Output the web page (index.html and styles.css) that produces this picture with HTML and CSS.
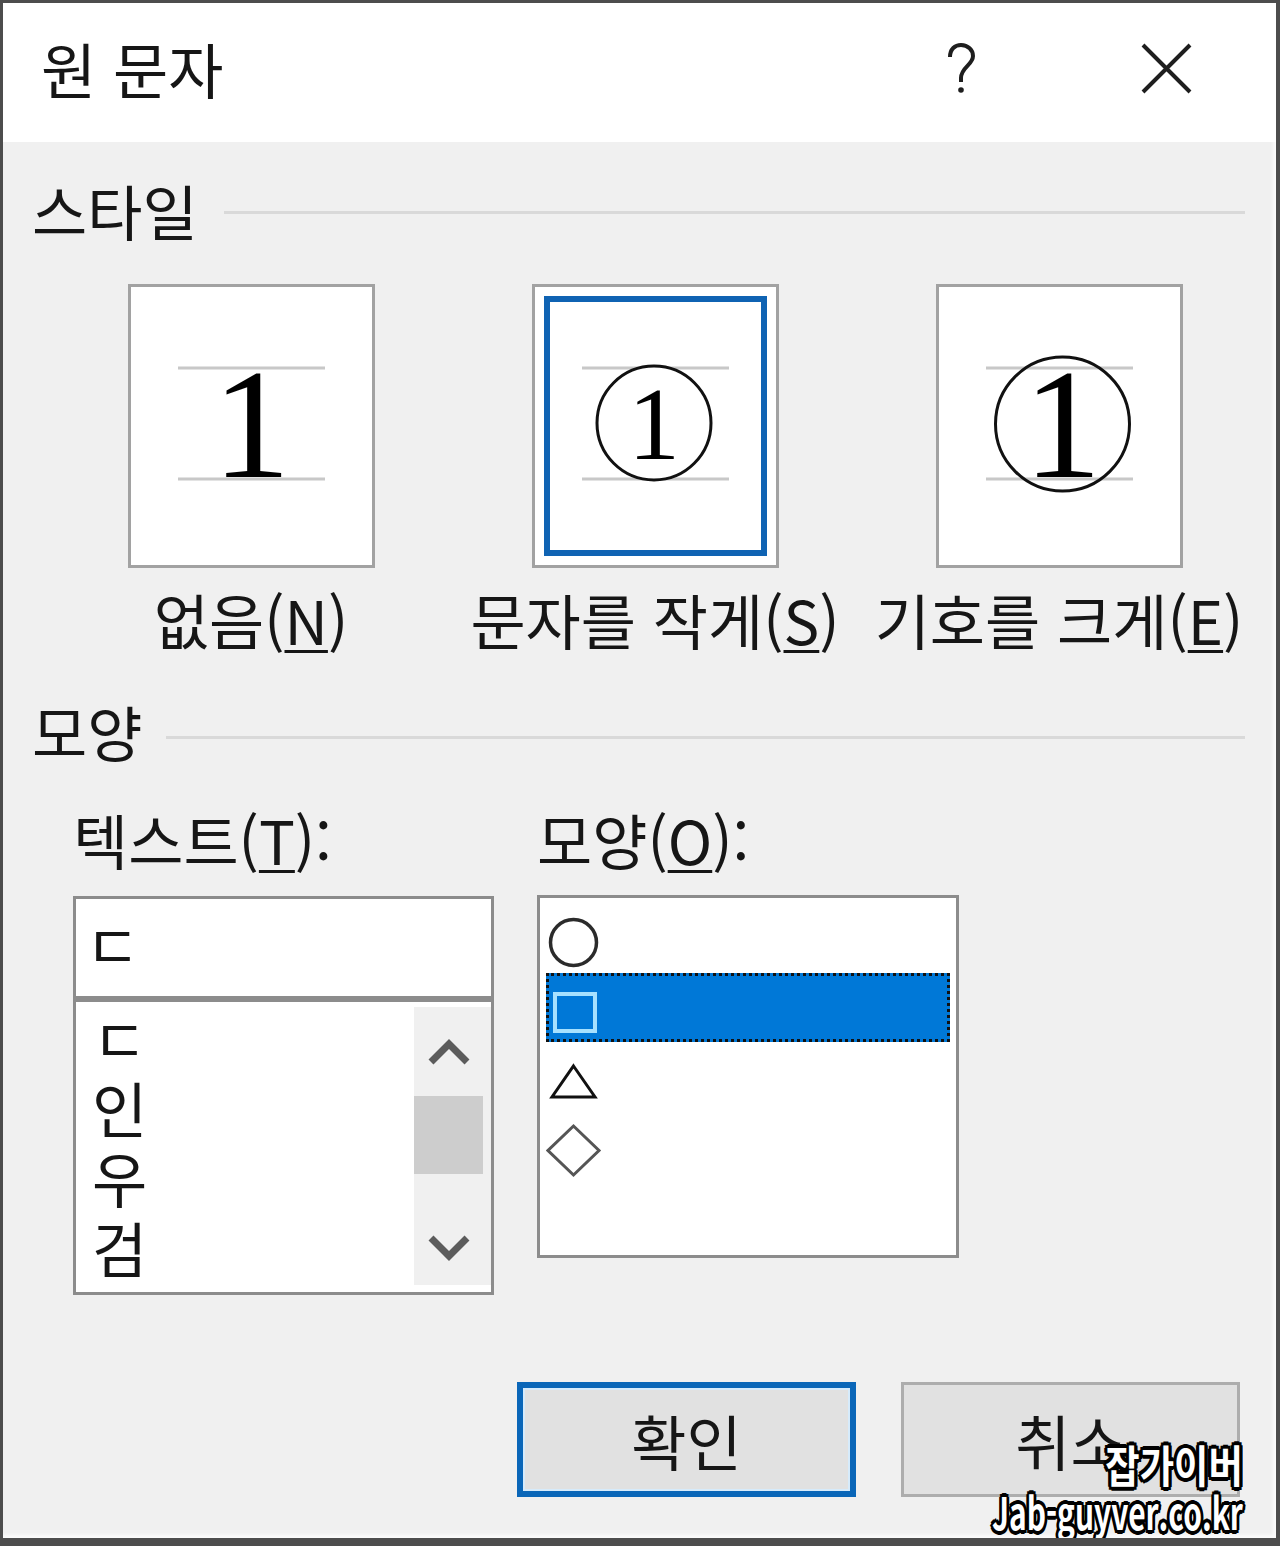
FILE: index.html
```html
<!DOCTYPE html>
<html lang="ko">
<head>
<meta charset="utf-8">
<title>원 문자</title>
<link rel="stylesheet" href="styles.css">
</head>
<body>
<div class="dialog">
  <div class="titlebar">
    <span class="title">원 문자</span>
    <svg class="help" width="32" height="52" viewBox="0 0 32 52"><path d="M5 14 C5 6 10 2 16 2 C23 2 28 7 28 13 C28 22 16 24 16 35 L16 39" fill="none" stroke="#1e1e1e" stroke-width="4"/><circle cx="16" cy="47" r="2.8" fill="#1e1e1e"/></svg>
    <svg class="close" width="51" height="51" viewBox="0 0 51 51"><path d="M2 2 L49 49 M49 2 L2 49" stroke="#1e1e1e" stroke-width="4"/></svg>
  </div>
  <div class="content">
    <div class="group-head style-head"><span>스타일</span><i class="rule"></i></div>
    <div class="styles">
      <div class="option">
        <div class="card">
          <svg width="241" height="278" viewBox="0 0 241 278">
            <line x1="47" y1="81" x2="194" y2="81" stroke="#c8c8c8" stroke-width="3"/>
            <line x1="47" y1="192" x2="194" y2="192" stroke="#c8c8c8" stroke-width="3"/>
            <text class="digit" x="120.5" y="190" font-size="156" text-anchor="middle">1</text>
          </svg>
        </div>
        <div class="opt-label">없음(<u>N</u>)</div>
      </div>
      <div class="option">
        <div class="card">
          <svg width="241" height="278" viewBox="0 0 241 278">
            <rect x="12" y="12" width="217" height="254" fill="none" stroke="#0f63b3" stroke-width="6"/>
            <line x1="47" y1="81" x2="194" y2="81" stroke="#c8c8c8" stroke-width="3"/>
            <line x1="47" y1="192" x2="194" y2="192" stroke="#c8c8c8" stroke-width="3"/>
            <circle cx="119" cy="136" r="57" fill="#fff" stroke="#111" stroke-width="3"/>
            <text class="digit" x="119" y="172" font-size="104" text-anchor="middle">1</text>
          </svg>
        </div>
        <div class="opt-label">문자를 작게(<u>S</u>)</div>
      </div>
      <div class="option">
        <div class="card">
          <svg width="241" height="278" viewBox="0 0 241 278">
            <line x1="47" y1="81" x2="194" y2="81" stroke="#c8c8c8" stroke-width="3"/>
            <line x1="47" y1="192" x2="194" y2="192" stroke="#c8c8c8" stroke-width="3"/>
            <text class="digit" x="123.5" y="190" font-size="156" text-anchor="middle">1</text>
            <circle cx="123.5" cy="137" r="67" fill="none" stroke="#111" stroke-width="3"/>
          </svg>
        </div>
        <div class="opt-label">기호를 크게(<u>E</u>)</div>
      </div>
    </div>

    <div class="group-head shape-head"><span>모양</span><i class="rule"></i></div>

    <div class="fields">
      <div class="field field-text">
        <div class="field-label">텍스트(<u>T</u>):</div>
        <div class="textbox">ㄷ</div>
        <div class="listbox">
          <ul class="items">
            <li>ㄷ</li>
            <li>인</li>
            <li>우</li>
            <li>검</li>
          </ul>
          <div class="scrollbar">
            <div class="sb-btn sb-up"><svg width="48" height="32" viewBox="0 0 48 32"><polyline points="6,26 24,8 42,26" fill="none" stroke="#5c5c5c" stroke-width="7"/></svg></div>
            <div class="sb-thumb"></div>
            <div class="sb-track"></div>
            <div class="sb-btn sb-down"><svg width="48" height="32" viewBox="0 0 48 32"><polyline points="6,6 24,24 42,6" fill="none" stroke="#5c5c5c" stroke-width="7"/></svg></div>
          </div>
        </div>
      </div>
      <div class="field field-shape">
        <div class="field-label">모양(<u>O</u>):</div>
        <div class="shapebox">
          <div class="shape-row"><svg width="56" height="69" viewBox="0 0 56 69"><circle cx="27.5" cy="38.5" r="23" fill="none" stroke="#2b2b2b" stroke-width="3.5"/></svg></div>
          <div class="shape-row selected"><svg width="56" height="69" viewBox="0 0 56 69"><rect x="9" y="21" width="40" height="37" fill="none" stroke="#a6e1ff" stroke-width="4"/></svg></div>
          <div class="shape-row"><svg width="56" height="69" viewBox="0 0 56 69"><polygon points="27.5,24 49,55 6,55" fill="none" stroke="#111" stroke-width="3"/></svg></div>
          <div class="shape-row"><svg width="56" height="69" viewBox="0 0 56 69"><polygon points="27.5,15 53,39.5 27.5,64 2,39.5" fill="none" stroke="#555" stroke-width="3"/></svg></div>
        </div>
      </div>
    </div>

    <div class="buttons">
      <button class="btn btn-default">확인</button>
      <button class="btn">취소</button>
    </div>
  </div>

  <div class="watermark">
    <span class="wm1">잡가이버</span>
    <span class="wm2">Jab-guyver.co.kr</span>
  </div>
</div>
</body>
</html>
```

FILE: styles.css
```css
* { box-sizing: border-box; }
html, body { margin: 0; padding: 0; }
body {
  width: 1280px;
  height: 1546px;
  font-family: "Noto Sans CJK KR", "Noto Sans", sans-serif;
  color: #161616;
  background: #f0f0f0;
}
.dialog {
  position: relative;
  width: 1280px;
  height: 1546px;
  border-style: solid;
  border-color: #4d4d4d;
  border-width: 3px 4px 8px 3px;
  background: #f0f0f0;
  overflow: hidden;
  box-shadow: inset -5px -5px 3px -2px #fbfbfb;
}
.titlebar {
  height: 139px;
  background: #fff;
  display: flex;
  align-items: flex-start;
  padding: 32px 84px 0 38px;
}
.title { flex: 1; font-size: 60px; line-height: 66px; }
.help { margin-top: 8px; display: block; }
.close { margin-left: 164px; margin-top: 8px; display: block; }

.content { padding: 0 31px 0 29px; }

.group-head {
  display: flex;
  align-items: center;
  font-size: 60px;
  line-height: 66px;
}
.group-head .rule {
  flex: 1;
  height: 3px;
  background: #d9d9d9;
  margin: 4px 0 0 26px;
}
.style-head { margin-top: 35px; }
.shape-head { margin-top: 46px; }
.shape-head .rule { margin-top: 12px; margin-left: 24px; }

.styles {
  display: grid;
  grid-template-columns: repeat(3, 380px);
  column-gap: 24px;
  width: 1188px;
  margin: 41px 0 0 29px;
}
.option { display: flex; flex-direction: column; align-items: center; }
.card {
  width: 247px;
  height: 284px;
  border: 3px solid #a2a2a2;
  background: #fff;
}
.card svg { display: block; }
.digit { font-family: "Liberation Serif", serif; fill: #000; }
.opt-label {
  margin-top: 18px;
  font-size: 60px;
  line-height: 66px;
  white-space: nowrap;
}
u { text-decoration-thickness: 3px; text-underline-offset: 5px; }

.fields {
  display: flex;
  gap: 43px;
  margin: 42px 0 0 41px;
}
.field { display: flex; flex-direction: column; }
.field-text { width: 421px; }
.field-shape { width: 422px; }
.field-label { font-size: 60px; line-height: 66px; white-space: nowrap; }

.textbox {
  margin-top: 24px;
  height: 103px;
  border: 3px solid #8c8c8c;
  background: #fff;
  font-size: 60px;
  line-height: 66px;
  padding: 11px 0 0 9px;
}
.listbox {
  height: 296px;
  border: 3px solid #8c8c8c;
  background: #fff;
  display: flex;
}
.items {
  flex: 1;
  list-style: none;
  margin: 0;
  padding: 2px 0 0 16px;
  font-size: 60px;
  line-height: 66px;
}
.items li { height: 70px; }
.scrollbar {
  width: 77px;
  margin: 5px 0 7px;
  padding-right: 8px;
  background: #f0f0f0;
  display: flex;
  flex-direction: column;
}
.sb-btn { display: flex; align-items: center; justify-content: center; }
.sb-btn svg { display: block; }
.sb-up { height: 89px; }
.sb-thumb { height: 78px; background: #cdcdcd; }
.sb-track { flex: 1; }
.sb-down { height: 74px; }

.shapebox {
  margin-top: 23px;
  height: 363px;
  border: 3px solid #8c8c8c;
  background: #fff;
  padding: 6px;
}
.shape-row { height: 69px; display: flex; align-items: center; }
.shape-row svg { display: block; }
.shape-row.selected {
  background: #0078d7;
  outline: 3px dotted #111;
  outline-offset: -3px;
}

.buttons {
  display: flex;
  justify-content: flex-end;
  gap: 45px;
  margin-top: 87px;
  padding-right: 5px;
}
.btn {
  width: 339px;
  height: 115px;
  border: 3px solid #adadad;
  background: #e1e1e1;
  font-family: inherit;
  font-size: 60px;
  line-height: 66px;
  color: #161616;
  padding: 0;
}
.btn-default {
  border: 6px solid #0a66b8;
  box-shadow: inset 0 0 0 2px #d6ebfb;
}

.watermark {
  position: absolute;
  right: 33px;
  bottom: 4px;
  display: flex;
  flex-direction: column;
  align-items: flex-end;
  color: #fff;
  font-weight: 700;
  text-shadow: -3px -3px 0 #000, 3px -3px 0 #000, -3px 3px 0 #000, 3px 3px 0 #000,
    0 -4px 0 #000, 0 4px 0 #000, -4px 0 0 #000, 4px 0 0 #000;
}
.wm1 {
  font-size: 44px;
  line-height: 48px;
  transform: scaleX(0.85);
  transform-origin: right center;
}
.wm2 {
  font-size: 44px;
  line-height: 46px;
  transform: scaleX(0.68);
  transform-origin: right center;
}
```
